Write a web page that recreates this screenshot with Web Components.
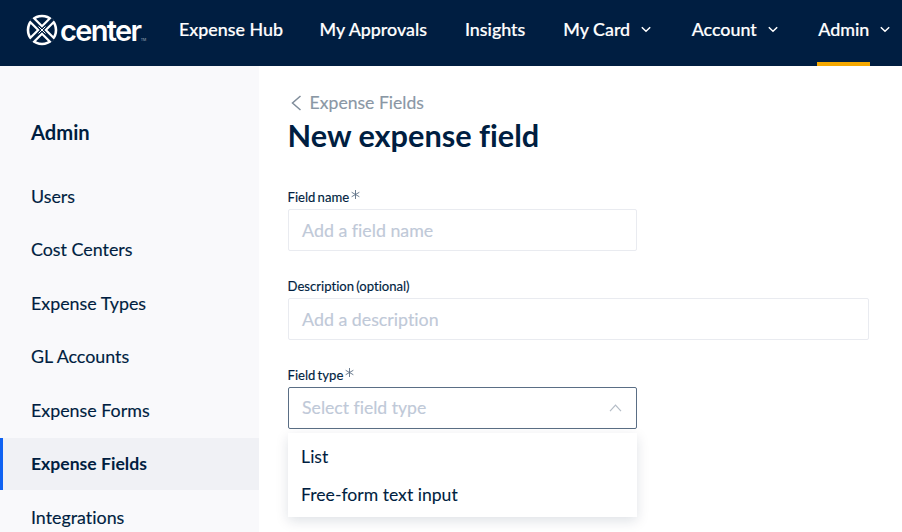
<!DOCTYPE html>
<html lang="en">
  <head>
    <meta charset="UTF-8" />
    <title>New expense field</title>
    <style>
      html, body { margin: 0; height: 100%; overflow: hidden; }
      body { font-family: Lato, "Noto Sans", sans-serif; font-variant-ligatures: none; color: #001e41; background: #fff; }
      app-shell { height: 532px; }
    </style>
  </head>
  <body>
    <app-shell>
      <top-nav slot="top">
        <nav-item style="margin-right: -1.5px">Expense Hub</nav-item>
        <nav-item>My Approvals</nav-item>
        <nav-item>Insights</nav-item>
        <nav-item menu>My Card</nav-item>
        <nav-item menu>Account</nav-item>
        <nav-item menu active>Admin</nav-item>
      </top-nav>
      <side-bar slot="side" heading="Admin">
        <side-item>Users</side-item>
        <side-item>Cost Centers</side-item>
        <side-item>Expense Types</side-item>
        <side-item>GL Accounts</side-item>
        <side-item>Expense Forms</side-item>
        <side-item active>Expense Fields</side-item>
        <side-item>Integrations</side-item>
      </side-bar>
      <expense-form>
        <form-field label="Field name" required placeholder="Add a field name" width="349.5"></form-field>
        <form-field label="Description (optional)" placeholder="Add a description" width="581.5"></form-field>
        <select-field label="Field type" required placeholder="Select field type">
          <span>List</span>
          <span>Free-form text input</span>
        </select-field>
      </expense-form>
    </app-shell>

    <script>
      function define(name, html, init) {
        customElements.define(name, class extends HTMLElement {
          constructor() {
            super()
            this.attachShadow({ mode: 'open' })
            this.shadowRoot.innerHTML = html
          }
          connectedCallback() {
            if (init) init(this)
          }
        })
      }

      define('app-shell', `
        <style>
          :host { display: grid; grid-template-columns: 259px 1fr; grid-template-rows: 66px 1fr; width: 902px; }
          .top { grid-column: 1 / 3; }
        </style>
        <div class="top"><slot name="top"></slot></div>
        <slot name="side"></slot>
        <slot></slot>
      `)

      define('top-nav', `
        <style>
          :host { display: flex; height: 66px; background: #001e41; color: #fff; box-sizing: border-box; padding-left: 26px; }
          .logo { display: flex; align-items: center; width: 153px; height: 60px; flex: none; }
          svg { display: block; flex: none; }
          .word { font: 600 29px/1 Inter, sans-serif; letter-spacing: -1.7px; margin-left: 2px; margin-top: 1px; }
          .tm { font: 400 3.5px/1 Inter, sans-serif; align-self: flex-end; margin: 0 0 18px .5px; color: #aab4c0; }
          .links { display: flex; gap: 38px; }
        </style>
        <div class="logo">
          <svg width="32" height="32" viewBox="0 0 32 32" fill="none" stroke="#fff">
            <circle cx="16" cy="16" r="14" stroke-width="2.6" />
            <path d="M6.1 6.1L25.9 25.9M25.9 6.1L6.1 25.9" stroke-width="7.6" />
            <path d="M5.1 5.1L26.9 26.9M26.9 5.1L5.1 26.9" stroke="#001e41" stroke-width="3.2" />
            <path d="M12.5 12.5L19.5 19.5M19.5 12.5L12.5 19.5" stroke-width="1" />
          </svg>
          <span class="word">center</span><span class="tm">TM</span>
        </div>
        <div class="links"><slot></slot></div>
      `)

      define('nav-item', `
        <style>
          :host { display: flex; position: relative; height: 66px; font-size: 17.85px; font-weight: 500; -webkit-text-stroke: .2px #fff; align-items: flex-start; padding-top: 17px; box-sizing: border-box; line-height: 24px; }
          svg { display: none; margin: 9px 2.5px 0 11px; }
          :host([menu]) svg { display: block; }
          :host([active])::after { content: ""; position: absolute; left: -1px; width: 53px; bottom: 0; height: 4px; background: #f5a800; }
        </style>
        <slot></slot>
        <svg width="10" height="7" viewBox="0 0 10 7" fill="none" stroke="#fff" stroke-width="1.5"><path d="M.8 1.2L5 5.3L9.2 1.2" /></svg>
      `)

      define('side-bar', `
        <style>
          :host { display: block; background: #f9f9fb; height: 466px; overflow: hidden; padding-top: 53px; box-sizing: border-box; }
          h2 { margin: 0 0 24.6px 31px; font-size: 20.2px; line-height: 26px; font-weight: 700; }
        </style>
        <h2></h2>
        <slot></slot>
      `, el => { el.shadowRoot.querySelector('h2').textContent = el.getAttribute('heading') })

      define('side-item', `
        <style>
          :host { display: flex; align-items: center; height: 52px; margin-bottom: 1.6px; padding-left: 31px; font-size: 17.85px; color: #001e41; box-sizing: border-box; -webkit-text-stroke: .15px #001e41; }
          :host([active]) { background: #f0f1f5; font-size: 17.6px; font-weight: 700; box-shadow: inset 3px 0 0 #0f62f2; -webkit-text-stroke: 0; }
        </style>
        <slot></slot>
      `)

      define('expense-form', `
        <style>
          :host { display: block; padding: 25px 0 0 28.6px; }
          .back { display: flex; align-items: center; gap: 8px; font-size: 17.6px; line-height: 24px; color: #8a97a5; margin-left: 2px; -webkit-text-stroke: .15px #8a97a5; }
          h1 { margin: 0 0 29px; font-size: 30.7px; line-height: 42px; font-weight: 700; }
          .fields { display: flex; flex-direction: column; gap: 24px; }
        </style>
        <div class="back">
          <svg width="12" height="16" viewBox="0 0 12 16" fill="none" stroke="#7f8c9a" stroke-width="1.5"><path d="M10.5 1L2.5 8L10.5 15" /></svg>
          <span>Expense Fields</span>
        </div>
        <h1>New expense field</h1>
        <div class="fields"><slot></slot></div>
      `)

      const fieldCss = `
        :host { display: block; }
        .label { display: flex; height: 21px; box-sizing: border-box; padding-top: 1px; align-items: flex-start; font-size: 13.1px; word-spacing: -1.2px; line-height: 20px; color: #001e41; margin-bottom: 2px; -webkit-text-stroke: .15px #001e41; }
        .star { display: none; margin-left: 2px; margin-top: 2.5px; }
        :host([required]) .star { display: block; }
        .box { box-sizing: border-box; height: 42px; display: flex; align-items: center; padding-left: 13.5px; font-size: 17.8px; color: #bfc9d8; background: #fff; border: 1px solid #e9ebf0; border-radius: 2px; -webkit-text-stroke: .15px #bfc9d8; }
      `
      const star = `<svg class="star" width="9" height="9" viewBox="0 0 10 10" fill="none" stroke="#5c6f84" stroke-width="1"><path d="M5 0V10M.7 2.5L9.3 7.5M9.3 2.5L.7 7.5" /></svg>`

      define('form-field', `
        <style>${fieldCss}</style>
        <div class="label"><span class="text"></span>${star}</div>
        <div class="box"><span class="ph"></span></div>
      `, el => {
        const root = el.shadowRoot
        root.querySelector('.text').textContent = el.getAttribute('label')
        root.querySelector('.ph').textContent = el.getAttribute('placeholder')
        root.querySelector('.box').style.width = el.getAttribute('width') + 'px'
      })

      define('select-field', `
        <style>${fieldCss}
          .wrap { position: relative; width: 349.5px; }
          .box { border-color: #5a6e85; justify-content: space-between; padding-right: 14px; padding-bottom: 1px; font-size: 17.6px; }
          .menu { position: absolute; left: 0; right: 0; top: 45.5px; height: 84px; box-sizing: border-box; padding: 5.4px 13.5px; background: #fff; box-shadow: 0 4px 12px rgba(0, 30, 65, .13); display: flex; flex-direction: column; font-size: 17.6px; line-height: 38px; color: #001e41; -webkit-text-stroke: .08px #001e41; }
        </style>
        <div class="label"><span class="text"></span>${star}</div>
        <div class="wrap">
          <div class="box">
            <span class="ph"></span>
            <svg width="13" height="8" viewBox="0 0 13 8" fill="none" stroke="#b4bcc6" stroke-width="1.2"><path d="M1 7.2L6.5 1.2L12 7.2" /></svg>
          </div>
          <div class="menu"><slot></slot></div>
        </div>
      `, el => {
        const root = el.shadowRoot
        root.querySelector('.text').textContent = el.getAttribute('label')
        root.querySelector('.ph').textContent = el.getAttribute('placeholder')
      })
    </script>
  </body>
</html>
